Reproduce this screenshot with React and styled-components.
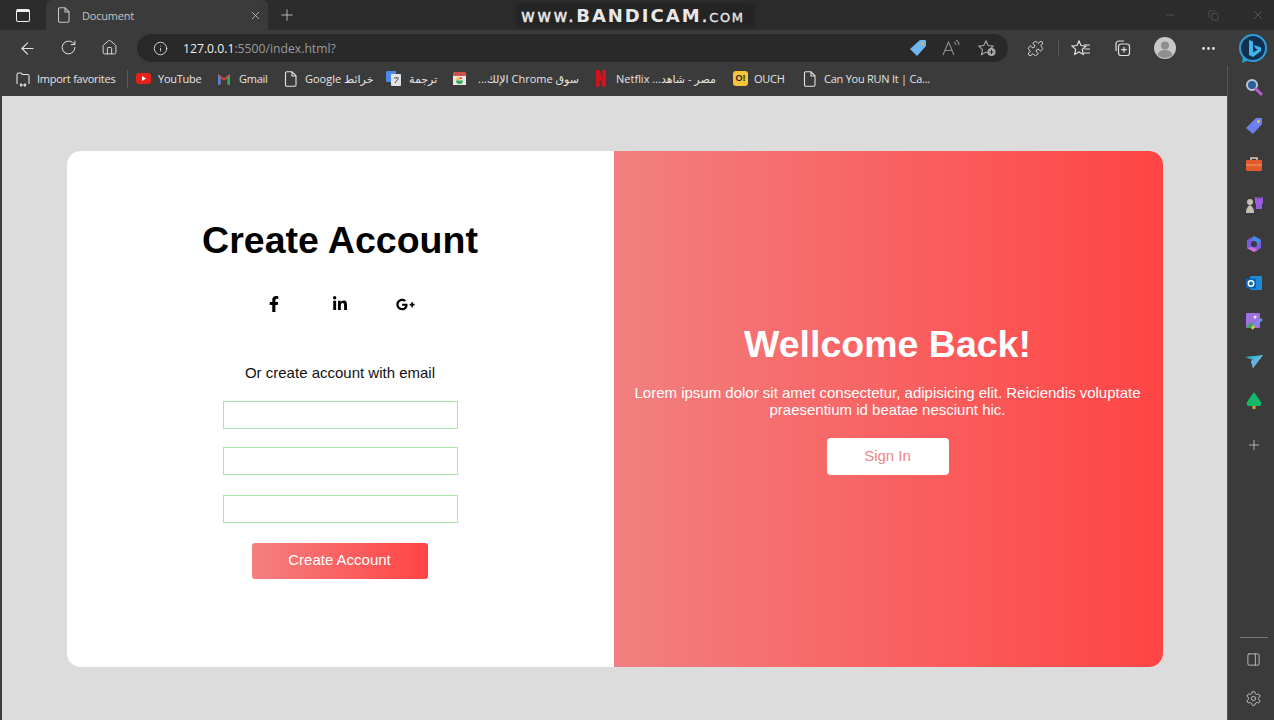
import styled, { createGlobalStyle } from "styled-components";
import { ArrowLeft, RotateCw, Home, Info, X, Plus, Minus, MoreHorizontal, Settings, PanelRight, Puzzle, Copy } from "lucide-react";
import { FaFacebookF, FaLinkedinIn, FaGooglePlusG } from "react-icons/fa";

const GlobalStyle = createGlobalStyle`
  * { box-sizing: border-box; }
  html, body { margin: 0; padding: 0; height: 100%; overflow: hidden; }
  body { font-family: "Liberation Sans", Arial, sans-serif; }
`;

const Window = styled.div`
  width: 1274px;
  height: 720px;
  display: flex;
  flex-direction: column;
  background: #3b3b3b;
  position: relative;
`;

const TabBar = styled.div`
  height: 30px;
  background: #2c2c2c;
  display: flex;
  align-items: flex-end;
  color: #d0d0d0;
`;

const TabSquare = styled.div`
  width: 46px;
  height: 30px;
  display: flex;
  align-items: center;
  justify-content: center;
`;

const TabFrame = styled.span`
  width: 14px;
  height: 13px;
  border: 1.5px solid #eee;
  border-top-width: 3px;
  border-radius: 2px;
`;

const Tab = styled.div`
  width: 222px;
  height: 30px;
  background: #3b3b3b;
  border-radius: 6px 6px 0 0;
  display: flex;
  align-items: center;
  padding: 0 6px 0 11px;
  gap: 12px;
  font: 11px "Open Sans", sans-serif;
  letter-spacing: -0.2px;
  color: #c4c4c4;
`;

const TabTitle = styled.span`
  flex: 1;
`;

const NewTab = styled.div`
  width: 38px;
  height: 30px;
  display: flex;
  align-items: center;
  justify-content: center;
`;

const WindowButtons = styled.div`
  margin-left: auto;
  display: flex;
  height: 30px;
  align-items: center;
  gap: 32px;
  padding-right: 9px;
  color: #777;
`;

const Watermark = styled.div`
  position: absolute;
  left: 517px;
  top: 4px;
  width: 237px;
  padding-left: 4px;
  height: 22px;
  background: rgba(24, 24, 24, 0.35);
  box-shadow: 0 0 5px rgba(24, 24, 24, 0.5);
  color: #e8e8e8;
  font: 700 18px/22px "DejaVu Sans", sans-serif;
  letter-spacing: 2px;
  white-space: nowrap;
`;

const WatermarkPrefix = styled.span`
  font-size: 17px;
  font-weight: 400;
  -webkit-text-stroke: 0.4px #e8e8e8;
  letter-spacing: 2.4px;
`;

const WatermarkSuffix = styled.span`
  font-size: 19px;
  font-weight: 400;
  font-variant: small-caps;
  -webkit-text-stroke: 0.3px #e8e8e8;
  letter-spacing: 1.6px;
`;

const Toolbar = styled.div`
  height: 36px;
  display: flex;
  align-items: center;
  color: #e2e2e2;
`;

const NavButton = styled.div`
  width: 41px;
  display: flex;
  justify-content: center;
`;

const NavGroup = styled.div`
  display: flex;
  padding-left: 7px;
  width: 137px;
`;

const AddressBar = styled.div`
  width: 871px;
  height: 28px;
  border-radius: 14px;
  background: #292929;
  display: flex;
  align-items: center;
  padding: 0 11px 0 16px;
  font: 12.2px "Open Sans", sans-serif;
  color: #f0f0f0;
`;

const Url = styled.span`
  margin-left: 15px;
  flex: 1;
`;

const UrlRest = styled.span`
  color: #9a9a9a;
`;

const AddressIcons = styled.div`
  display: flex;
  align-items: center;
  gap: 15px;
  color: #a8a8a8;
`;

const ToolIcons = styled.div`
  display: flex;
  align-items: center;
  margin-left: 17px;
`;

const ToolButton = styled.div`
  width: ${(p) => p.$w || 41}px;
  display: flex;
  justify-content: center;
  align-items: center;
`;

const Divider = styled.span`
  width: 1px;
  height: 18px;
  background: #555;
`;

const Glyph = styled.svg`
  display: block;
  flex: none;
`;

const BodyRow = styled.div`
  flex: 1;
  display: flex;
  min-height: 0;
`;

const MainColumn = styled.div`
  flex: 1;
  display: flex;
  flex-direction: column;
  min-width: 0;
`;

const Bookmarks = styled.div`
  height: 30px;
  display: flex;
  align-items: center;
  padding: 0 0 5px 15px;
  color: #e4e4e4;
  font: 11px "Open Sans", "DejaVu Sans", sans-serif;
  white-space: nowrap;
`;

const Bookmark = styled.div`
  display: flex;
  align-items: center;
  gap: ${(p) => p.$gap ?? 7}px;
  width: ${(p) => p.$w}px;
  flex: none;
`;

const BookmarkLabel = styled.span`
  letter-spacing: ${(p) => (p.$tight ? "-0.25px" : "0")};
`;

const BookmarkSep = styled.span`
  width: 1px;
  height: 18px;
  background: #5a5a5a;
  margin-right: 8px;
  flex: none;
`;

const OuchIcon = styled.span`
  width: 15px;
  height: 15px;
  border-radius: 3px;
  background: #f6c33b;
  color: #222;
  font: 700 9px/15px "Liberation Sans", sans-serif;
  text-align: center;
`;

const Page = styled.div`
  flex: 1;
  background: #dcdcdc;
  display: flex;
  align-items: center;
  justify-content: center;
  border-left: 2px solid #3b3b3b;
  padding-top: 2px;
`;

const Card = styled.div`
  width: 1096px;
  height: 516px;
  background: #fff;
  border-radius: 14px;
  overflow: hidden;
  display: flex;
`;

const FormPanel = styled.div`
  width: 547px;
  display: flex;
  flex-direction: column;
  align-items: center;
  padding-top: 67px;
`;

const Heading = styled.h1`
  margin: 0;
  font-size: 37.5px;
  line-height: 44px;
  font-weight: 700;
  color: ${(p) => p.$color || "#000"};
`;

const Socials = styled.div`
  display: flex;
  justify-content: center;
  margin: 29px 1px 0 0;
  color: #000;
`;

const Social = styled.a`
  width: 65.5px;
  height: 26px;
  display: flex;
  align-items: center;
  justify-content: center;
  font-size: ${(p) => p.$size}px;
`;

const Hint = styled.p`
  margin: 47px 0 0;
  font-size: 15px;
  line-height: 18px;
  color: #111;
`;

const Field = styled.input`
  width: 235px;
  height: 28px;
  margin-top: ${(p) => p.$top}px;
  border: 1px solid #a9e6a9;
  background: #fff;
  outline: none;
  display: block;
`;

const SubmitButton = styled.button`
  width: 176px;
  height: 36px;
  margin: 20px 1px 0 0;
  padding: 0 0 3px;
  border: none;
  border-radius: 3px;
  background: linear-gradient(to right, #f48080, #ff4444);
  color: #fff;
  font: 15px "Liberation Sans", sans-serif;
`;

const WelcomePanel = styled.div`
  width: 549px;
  background: linear-gradient(to right, #f28080, #ff4444);
  display: flex;
  flex-direction: column;
  align-items: center;
  justify-content: center;
  color: #fff;
  text-align: center;
  padding: 0 20px 21px 19px;
`;

const WelcomeText = styled.p`
  margin: 18px 0 0;
  font-size: 15px;
  line-height: 17px;
`;

const SignInButton = styled.button`
  width: 122px;
  height: 37px;
  margin-top: 20px;
  padding: 0 0 3px;
  border: none;
  border-radius: 4px;
  background: #fff;
  color: #ee8585;
  font: 15px "Liberation Sans", sans-serif;
`;

const Sidebar = styled.div`
  width: 47px;
  flex: none;
  background: #3b3b3b;
  border-left: 1px solid #555;
  display: flex;
  flex-direction: column;
  align-items: center;
  padding: 1px 0 0 5px;
  color: #cfcfcf;
`;

const SideIcon = styled.div`
  height: 39.3px;
  width: 100%;
  display: flex;
  align-items: center;
  justify-content: center;
  flex: none;
`;

const AddSideIcon = styled(SideIcon)`
  margin-top: 5px;
`;

const SideFooter = styled.div`
  margin-top: auto;
  width: 100%;
  display: flex;
  flex-direction: column;
  align-items: center;
  padding-bottom: 13px;
`;

const SideRule = styled.span`
  width: 28px;
  height: 1px;
  background: #777;
  margin-bottom: 14px;
`;

const SideSpacer = styled.span`
  height: 23px;
`;

const BingBadge = styled.svg`
  position: absolute;
  right: 6px;
  top: 33px;
`;

const PagePlain = () => (
  <Glyph width="13" height="16" viewBox="0 0 13 16" fill="none" stroke="currentColor" strokeWidth="1.1">
    <path d="M1.500 2a1.200 1.200 0 0 1 1.200-1.200H8l4 4V14a1.200 1.200 0 0 1-1.200 1.200H2.700A1.200 1.200 0 0 1 1.500 14z" />
    <path d="M8 1v4h4" />
  </Glyph>
);

const ImportIcon = () => (
  <Glyph width="16" height="16" viewBox="0 0 16 16" fill="none" stroke="currentColor" strokeWidth="1.1">
    <path d="M2 13V3.500a1.500 1.500 0 0 1 1.500-1.500H6l1.500 1.500h5A1.500 1.500 0 0 1 14 5v8" />
    <path d="M5 14h6M5 14l1.500-1.500M5 14l1.500 1.500M11 14l-1.500-1.500M11 14l-1.500 1.500" />
  </Glyph>
);

const PriceTag = () => (
  <Glyph width="18" height="18" viewBox="0 0 18 18">
    <path d="M11 1h5a1 1 0 0 1 1 1v5L8 17 1 10z" fill="#6fb6ee" />
    <circle cx="13.500" cy="4.500" r="1.300" fill="#d9c548" />
  </Glyph>
);

const ReadAloud = () => (
  <Glyph width="20" height="18" viewBox="0 0 20 18" fill="none" stroke="#8d8d8d" strokeWidth="1.1">
    <path d="M1 16L6.500 3 12 16M3 11.500h7" />
    <path d="M12 3c1.500.8 2 1.800 2 3M14 1c2 1 3 3 3 5" />
  </Glyph>
);

const StarAdd = () => (
  <Glyph width="20" height="18" viewBox="0 0 20 18">
    <path d="M9 2l2.200 4.600 5 .6-3.700 3.400 1 5-4.500-2.500-4.500 2.500 1-5L1.800 7.200l5-.6z" fill="none" stroke="#a8a8a8" strokeWidth="1.1" />
    <circle cx="14.500" cy="13" r="4" fill="#a8a8a8" />
    <path d="M14.500 11v4M12.500 13h4" stroke="#292929" />
  </Glyph>
);

const FavoritesIcon = () => (
  <Glyph width="20" height="18" viewBox="0 0 20 18" fill="none" stroke="currentColor" strokeWidth="1.2">
    <path d="M8 2l2 4.500 5 .6-3.700 3.300 1 5L8 13l-4.300 2.400 1-5L1 7.100l5-.6z" />
    <path d="M13 6h6M13.500 10H19M13 14h6" />
  </Glyph>
);

const CollectionsIcon = () => (
  <Glyph width="18" height="18" viewBox="0 0 18 18" fill="none" stroke="currentColor" strokeWidth="1.2">
    <path d="M3 12V5a3 3 0 0 1 3-3h5" />
    <rect x="5.500" y="5" width="11" height="11.500" rx="2.500" />
    <path d="M11 8v5.500M8.200 10.700h5.600" />
  </Glyph>
);

const bookmarks = [
  { label: "YouTube", w: 81, tight: true, icon: <Glyph width="15" height="15" viewBox="0 0 15 15"><rect y="2" width="15" height="11" rx="3" fill="#e8201a" /><path d="M6 5l4 2.500L6 10z" fill="#fff" /></Glyph> },
  { label: "Gmail", w: 67, gap: 8, tight: true, icon: <Glyph width="14" height="14" viewBox="0 0 14 14"><path d="M1 2.500v10h2.500V6L7 8.600 10.500 6v6.500H13v-10h-1L7 6.500 2 2.500z" fill="#e0483c" /><path d="M10.500 6v6.500H13v-10z" fill="#3aa757" /><path d="M1 2.500v10h2.500V6z" fill="#4a88ea" /></Glyph> },
  { label: "Google خرائط", w: 102, gap: 8, doc: true },
  { label: "ترجمة", w: 66, gap: 8, icon: <Glyph width="15" height="15" viewBox="0 0 15 15"><rect width="10" height="11" rx="1" fill="#4a88ea" /><rect x="5" y="3" width="10" height="12" rx="1" fill="#dfe3e8" /><path d="M8 7h5M10.500 6v1M9 12l3-4" stroke="#555" fill="none" /></Glyph> },
  { label: "سوق Chrome الإلك...", w: 143, gap: 11, rtl: true, icon: <Glyph width="15" height="15" viewBox="0 0 15 15"><path d="M2 1h11l1 4v9H1V5z" fill="#e8e8e8" /><path d="M7.500 6a3.500 3.500 0 0 1 3.200 2H7.500z" fill="#e0463a" /><path d="M4 9.500a3.500 3.500 0 0 1 3.500-3.500v3z" fill="#f5c23a" /><path d="M4 9.500a3.500 3.500 0 0 0 7 0z" fill="#3aa757" /><path d="M2 1h11l1 4H1z" fill="#d05050" /></Glyph> },
  { label: "مصر - شاهد... Netflix", w: 138, gap: 9, rtl: true, icon: <Glyph width="12" height="17" viewBox="0 0 12 17"><path d="M1 0h3.500l3 9V0H11v17H8L4.500 8v9H1z" fill="#d4121c" /></Glyph> },
  { label: "OUCH", w: 70, gap: 6, tight: true, ouch: true },
  { label: "Can You RUN It | Ca...", w: 130, gap: 8, tight: true, doc: true },
];

const sideIcons = [
  <Glyph key="search" width="18" height="18" viewBox="0 0 18 18"><circle cx="7" cy="7" r="5" fill="#2d5f9e" stroke="#b8c8d8" strokeWidth="2" /><path d="M11 11l5 5" stroke="#c05ad0" strokeWidth="3" strokeLinecap="round" /></Glyph>,
  <Glyph key="tag" width="18" height="18" viewBox="0 0 18 18"><path d="M11 1h6v6l-9 10-7-6z" fill="#6f7ff0" /><circle cx="13.500" cy="4.500" r="1.500" fill="#d8c84a" /></Glyph>,
  <Glyph key="tools" width="18" height="18" viewBox="0 0 18 18"><path d="M6 4V2h6v2" fill="none" stroke="#e8c8b0" strokeWidth="1.500" /><rect x="1" y="4" width="16" height="11" rx="1" fill="#e05a2a" /><rect x="1" y="8.500" width="16" height="1" fill="#f4a070" /></Glyph>,
  <Glyph key="chess" width="20" height="20" viewBox="0 0 20 20"><circle cx="6" cy="7" r="3" fill="#c4c0b8" /><path d="M2 18c0-4 1-6 4-8 3 2 4 4 4 8z" fill="#c4c0b8" /><path d="M11 2h2v1.500h1.500V2H16v1.500h1.500V2H19v6l-1 1v5h-6V9l-1-1z" fill="#9a5be0" /></Glyph>,
  <Glyph key="copilot" width="18" height="18" viewBox="0 0 18 18"><path d="M9 1l7 4v8l-7 4-7-4V5z" fill="#7a5be0" /><path d="M9 1l7 4-3 5-6-5z" fill="#3f8ee8" /><path d="M2 13l5-1 6 3-4 2z" fill="#d070d8" /><circle cx="9" cy="9" r="3" fill="#3b3b3b" /></Glyph>,
  <Glyph key="outlook" width="18" height="18" viewBox="0 0 18 18"><rect x="5" y="2" width="12" height="14" rx="1" fill="#1d8ad6" /><rect x="1" y="4.500" width="10" height="10" fill="#0c64b4" /><circle cx="6" cy="9.500" r="2.700" fill="none" stroke="#fff" strokeWidth="1.500" /></Glyph>,
  <Glyph key="designer" width="20" height="20" viewBox="0 0 20 20"><rect x="2" y="1" width="14" height="15" rx="1" fill="#a070e0" /><path d="M2 16l5-6 5 6z" fill="#3aa757" /><circle cx="11" cy="5" r="1.500" fill="#eee" /><path d="M9 15L18 7" stroke="#7090f0" strokeWidth="2.500" /><path d="M8 17l2-3" stroke="#f0c040" strokeWidth="2.500" /></Glyph>,
  <Glyph key="send" width="18" height="16" viewBox="0 0 18 16"><path d="M0 3l18-2-7 6z" fill="#38b8d8" /><path d="M18 1L8 14 6 7z" fill="#f4c84a" /><path d="M18 1L6 7l2 7z" fill="#5ab0f0" /></Glyph>,
  <Glyph key="tree" width="18" height="20" viewBox="0 0 18 20"><path d="M9 1l7 10c1 2 0 4-2 4H4c-2 0-3-2-2-4z" fill="#14b868" /><rect x="7.500" y="15" width="3" height="3" fill="#d8a030" /></Glyph>,
];

const App = () => {
  return (
    <Window>
      <GlobalStyle />
      <TabBar>
        <TabSquare><TabFrame /></TabSquare>
        <Tab>
          <PagePlain />
          <TabTitle>Document</TabTitle>
          <X size={13} strokeWidth={1.5} />
        </Tab>
        <NewTab><Plus size={18} strokeWidth={1.1} /></NewTab>
        <WindowButtons>
          <Minus size={12} strokeWidth={1} />
          <Copy size={11} strokeWidth={1} />
          <X size={14} strokeWidth={1} />
        </WindowButtons>
      </TabBar>
      <Watermark>
        <WatermarkPrefix>www.</WatermarkPrefix>BANDICAM<WatermarkSuffix>.com</WatermarkSuffix>
      </Watermark>
      <Toolbar>
        <NavGroup>
          <NavButton><ArrowLeft size={19} strokeWidth={1.4} /></NavButton>
          <NavButton><RotateCw size={17} strokeWidth={1.4} /></NavButton>
          <NavButton><Home size={17} strokeWidth={1.3} /></NavButton>
        </NavGroup>
        <AddressBar>
          <Info size={15} strokeWidth={1.3} />
          <Url>127.0.0.1<UrlRest>:5500/index.html?</UrlRest></Url>
          <AddressIcons>
            <PriceTag />
            <ReadAloud />
            <StarAdd />
          </AddressIcons>
        </AddressBar>
        <ToolIcons>
          <ToolButton $w={20}><Puzzle size={17} strokeWidth={1.3} /></ToolButton>
          <ToolButton $w={26}><Divider /></ToolButton>
          <ToolButton $w={20}><FavoritesIcon /></ToolButton>
          <ToolButton $w={62}><CollectionsIcon /></ToolButton>
          <ToolButton $w={24}>
            <Glyph width="22" height="22" viewBox="0 0 22 22">
              <circle cx="11" cy="11" r="11" fill="#c8c8c8" />
              <circle cx="11" cy="8.500" r="4" fill="#8f8f8f" />
              <path d="M3.500 18c1-4 4-5 7.500-5s6.500 1 7.500 5a11 11 0 0 1-15 0z" fill="#8f8f8f" />
            </Glyph>
          </ToolButton>
          <ToolButton $w={62}><MoreHorizontal size={17} strokeWidth={2} /></ToolButton>
        </ToolIcons>
      </Toolbar>
      <BingBadge width="30" height="32" viewBox="0 0 30 32">
        <circle cx="15" cy="15" r="13" fill="#123050" stroke="#2f9fd8" strokeWidth="2" />
        <path d="M5 24l-1 6 7-3z" fill="#2f9fd8" />
        <path d="M11 7l4 1.500v11l5-3-2.500-1-1.500-3.500 7 2.500v3.500L15 24l-4-2z" fill="#42b4ef" />
      </BingBadge>
      <BodyRow>
        <MainColumn>
          <Bookmarks>
            <Bookmark $w={112} $gap={6}>
              <ImportIcon />
              <BookmarkLabel $tight>Import favorites</BookmarkLabel>
            </Bookmark>
            <BookmarkSep />
            {bookmarks.map((b) => (
              <Bookmark key={b.label} $w={b.w} $gap={b.gap}>
                {b.doc ? <PagePlain /> : b.ouch ? <OuchIcon>O!</OuchIcon> : b.icon}
                <BookmarkLabel $tight={b.tight} dir={b.rtl ? "rtl" : undefined}>{b.label}</BookmarkLabel>
              </Bookmark>
            ))}
          </Bookmarks>
          <Page>
            <Card>
              <FormPanel>
                <Heading>Create Account</Heading>
                <Socials>
                  <Social $size={16}><FaFacebookF /></Social>
                  <Social $size={16}><FaLinkedinIn /></Social>
                  <Social $size={19}><FaGooglePlusG /></Social>
                </Socials>
                <Hint>Or create account with email</Hint>
                <Field $top={19} />
                <Field $top={18} />
                <Field $top={20} />
                <SubmitButton>Create Account</SubmitButton>
              </FormPanel>
              <WelcomePanel>
                <Heading $color="#fff">Wellcome Back!</Heading>
                <WelcomeText>
                  Lorem ipsum dolor sit amet consectetur, adipisicing elit. Reiciendis voluptate praesentium id beatae nesciunt hic.
                </WelcomeText>
                <SignInButton>Sign In</SignInButton>
              </WelcomePanel>
            </Card>
          </Page>
        </MainColumn>
        <Sidebar>
          {sideIcons.map((icon) => (
            <SideIcon key={icon.key}>{icon}</SideIcon>
          ))}
          <AddSideIcon><Plus size={16} strokeWidth={1.2} /></AddSideIcon>
          <SideFooter>
            <SideRule />
            <PanelRight size={15} strokeWidth={1.3} />
            <SideSpacer />
            <Settings size={17} strokeWidth={1.3} />
          </SideFooter>
        </Sidebar>
      </BodyRow>
    </Window>
  );
};

export default App;
